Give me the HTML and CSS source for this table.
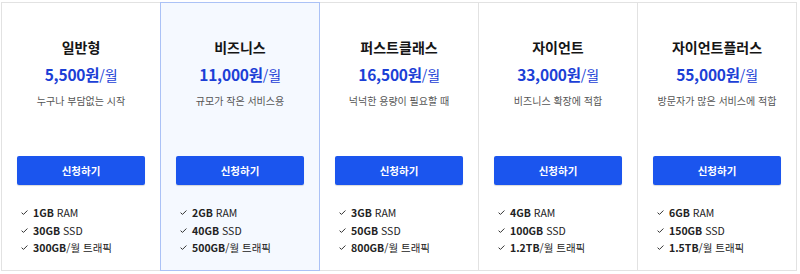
FILE: index.html
```html
<!DOCTYPE html>
<html lang="ko">
<head>
<meta charset="utf-8">
<link rel="stylesheet" href="styles.css">
</head>
<body>
<div class="plans">
  <div class="card">
    <div class="title">일반형</div>
    <div class="price">5,500원<span class="per">/월</span></div>
    <div class="desc">누구나 부담없는 시작</div>
    <div class="btn">신청하기</div>
    <ul class="feats">
      <li><svg class="chk" viewBox="0 0 8 6"><path d="M0.5 3.2 L2.8 5.3 L7.5 0.6"/></svg><b>1GB</b>&nbsp;RAM</li>
      <li><svg class="chk" viewBox="0 0 8 6"><path d="M0.5 3.2 L2.8 5.3 L7.5 0.6"/></svg><b>30GB</b>&nbsp;SSD</li>
      <li><svg class="chk" viewBox="0 0 8 6"><path d="M0.5 3.2 L2.8 5.3 L7.5 0.6"/></svg><b>300GB</b>/월&nbsp;트래픽</li>
    </ul>
  </div>
  <div class="card featured">
    <div class="title">비즈니스</div>
    <div class="price">11,000원<span class="per">/월</span></div>
    <div class="desc">규모가 작은 서비스용</div>
    <div class="btn">신청하기</div>
    <ul class="feats">
      <li><svg class="chk" viewBox="0 0 8 6"><path d="M0.5 3.2 L2.8 5.3 L7.5 0.6"/></svg><b>2GB</b>&nbsp;RAM</li>
      <li><svg class="chk" viewBox="0 0 8 6"><path d="M0.5 3.2 L2.8 5.3 L7.5 0.6"/></svg><b>40GB</b>&nbsp;SSD</li>
      <li><svg class="chk" viewBox="0 0 8 6"><path d="M0.5 3.2 L2.8 5.3 L7.5 0.6"/></svg><b>500GB</b>/월&nbsp;트래픽</li>
    </ul>
  </div>
  <div class="card">
    <div class="title">퍼스트클래스</div>
    <div class="price">16,500원<span class="per">/월</span></div>
    <div class="desc">넉넉한 용량이 필요할 때</div>
    <div class="btn">신청하기</div>
    <ul class="feats">
      <li><svg class="chk" viewBox="0 0 8 6"><path d="M0.5 3.2 L2.8 5.3 L7.5 0.6"/></svg><b>3GB</b>&nbsp;RAM</li>
      <li><svg class="chk" viewBox="0 0 8 6"><path d="M0.5 3.2 L2.8 5.3 L7.5 0.6"/></svg><b>50GB</b>&nbsp;SSD</li>
      <li><svg class="chk" viewBox="0 0 8 6"><path d="M0.5 3.2 L2.8 5.3 L7.5 0.6"/></svg><b>800GB</b>/월&nbsp;트래픽</li>
    </ul>
  </div>
  <div class="card">
    <div class="title">자이언트</div>
    <div class="price">33,000원<span class="per">/월</span></div>
    <div class="desc">비즈니스 확장에 적합</div>
    <div class="btn">신청하기</div>
    <ul class="feats">
      <li><svg class="chk" viewBox="0 0 8 6"><path d="M0.5 3.2 L2.8 5.3 L7.5 0.6"/></svg><b>4GB</b>&nbsp;RAM</li>
      <li><svg class="chk" viewBox="0 0 8 6"><path d="M0.5 3.2 L2.8 5.3 L7.5 0.6"/></svg><b>100GB</b>&nbsp;SSD</li>
      <li><svg class="chk" viewBox="0 0 8 6"><path d="M0.5 3.2 L2.8 5.3 L7.5 0.6"/></svg><b>1.2TB</b>/월&nbsp;트래픽</li>
    </ul>
  </div>
  <div class="card">
    <div class="title">자이언트플러스</div>
    <div class="price">55,000원<span class="per">/월</span></div>
    <div class="desc">방문자가 많은 서비스에 적합</div>
    <div class="btn">신청하기</div>
    <ul class="feats">
      <li><svg class="chk" viewBox="0 0 8 6"><path d="M0.5 3.2 L2.8 5.3 L7.5 0.6"/></svg><b>6GB</b>&nbsp;RAM</li>
      <li><svg class="chk" viewBox="0 0 8 6"><path d="M0.5 3.2 L2.8 5.3 L7.5 0.6"/></svg><b>150GB</b>&nbsp;SSD</li>
      <li><svg class="chk" viewBox="0 0 8 6"><path d="M0.5 3.2 L2.8 5.3 L7.5 0.6"/></svg><b>1.5TB</b>/월&nbsp;트래픽</li>
    </ul>
  </div>
</div>
</body>
</html>
```
FILE: styles.css
```css
* { box-sizing: border-box; }
html, body { margin: 0; padding: 0; background: #fff; }
body {
  font-family: "Noto Sans CJK KR", "Noto Sans", sans-serif;
  color: #1a1a1a;
}
.plans {
  display: flex;
  margin: 2px 0 0 1px;
}
.card {
  flex: 0 0 160px;
  width: 160px;
  height: 269px;
  border: 1px solid #e2e2e2;
  margin-left: -1px;
  padding: 33px 15px 0;
  text-align: center;
  background: #fff;
}
.card:first-child { margin-left: 0; }
.featured {
  position: relative;
  z-index: 1;
  background: #f5f9ff;
  border-color: #abc2f6;
}
.title {
  font-size: 14px;
  line-height: 22px;
  font-weight: 700;
  color: #151515;
}
.price {
  margin-top: 4px;
  font-size: 15.5px;
  line-height: 24px;
  font-weight: 700;
  color: #1c3fd6;
  letter-spacing: -0.2px;
}
.per {
  font-size: 14px;
  font-weight: 400;
}
.desc {
  margin-top: 6px;
  font-size: 10px;
  line-height: 16px;
  color: #555;
  white-space: nowrap;
}
.btn {
  margin-top: 47px;
  height: 29px;
  line-height: 29px;
  background: #1b55ee;
  color: #fff;
  font-size: 10.5px;
  font-weight: 700;
  border-radius: 2px;
  box-shadow: 0 1px 1px rgba(0, 0, 0, 0.15);
}
.feats {
  list-style: none;
  margin: 19px 0 0;
  padding: 0 0 0 4px;
  text-align: left;
}
.feats li {
  display: flex;
  align-items: center;
  font-size: 10.5px;
  line-height: 17.5px;
  height: 17.5px;
  color: #222;
  white-space: nowrap;
}
.feats b { font-weight: 600; }
.chk {
  width: 7px;
  height: 5px;
  margin-right: 5px;
  fill: none;
  stroke: #333;
  stroke-width: 1.2;
}
```
